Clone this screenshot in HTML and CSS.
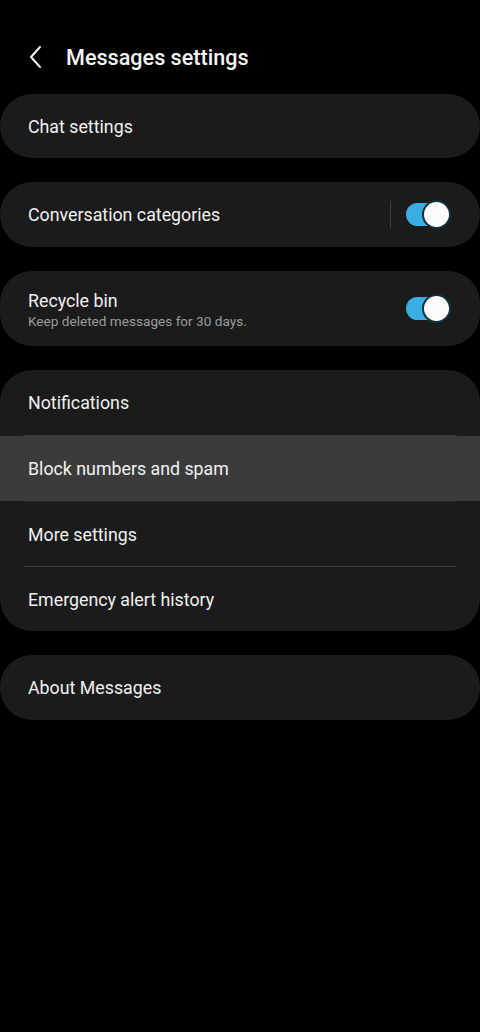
FILE: index.html
```html
<!DOCTYPE html>
<html lang="en">
<head>
    <meta charset="UTF-8">
    <title>Messages settings</title>
    <link rel="stylesheet" href="styles.css">
</head>
<body>
<div class="page">
    <div class="header">
        <svg class="back" width="14" height="24" viewBox="0 0 14 24">
            <path d="M11 2 L2 12 L11 22" fill="none" stroke="#f2f2f2" stroke-width="2" stroke-linecap="round" stroke-linejoin="round"/>
        </svg>
        <h1 class="title">Messages settings</h1>
    </div>

    <div class="card">
        <div class="row"><span class="label">Chat settings</span></div>
    </div>

    <div class="card">
        <div class="row row-switch">
            <span class="label">Conversation categories</span>
            <span class="vline"></span>
            <span class="toggle"></span>
        </div>
    </div>

    <div class="card">
        <div class="row row-tall">
            <div class="text">
                <span class="label">Recycle bin</span>
                <span class="sub">Keep deleted messages for 30 days.</span>
            </div>
            <span class="toggle"></span>
        </div>
    </div>

    <div class="card">
        <div class="row row-first"><span class="label">Notifications</span></div>
        <div class="divider"></div>
        <div class="row row-active"><span class="label">Block numbers and spam</span></div>
        <div class="divider divider-dark"></div>
        <div class="row"><span class="label">More settings</span></div>
        <div class="divider"></div>
        <div class="row"><span class="label">Emergency alert history</span></div>
    </div>

    <div class="card">
        <div class="row row-switch"><span class="label">About Messages</span></div>
    </div>
</div>
</body>
</html>
```

FILE: styles.css
```css
* {
    margin: 0;
    padding: 0;
    box-sizing: border-box;
}

body {
    background: #000000;
    font-family: Roboto, "Liberation Sans", sans-serif;
    color: #f1f1f1;
}

.page {
    width: 480px;
}

.header {
    display: flex;
    align-items: center;
    height: 94px;
    padding: 20px 0 0 29px;
}

.back {
    display: block;
}

.title {
    margin-left: 23px;
    font-size: 21.6px;
    font-weight: 500;
    color: #f4f4f4;
}

.card {
    background: #1b1b1b;
    border-radius: 32px;
    margin-bottom: 24px;
    overflow: hidden;
}

.row {
    display: flex;
    align-items: center;
    height: 64px;
    padding: 0 31px 0 28px;
}

.row-switch {
    height: 65px;
}

.row-first {
    height: 65px;
}

.row-tall {
    height: 75px;
}

.row-active {
    background: #3b3b3b;
    height: 65px;
}

.label {
    font-size: 17.8px;
    color: #f1f1f1;
    flex: 1;
}

.text {
    display: flex;
    flex-direction: column;
    flex: 1;
    padding-top: 2px;
}

.sub {
    font-size: 13.6px;
    color: #9c9c9c;
    margin-top: 2px;
}

.divider {
    height: 1px;
    margin: 0 23px;
    background: #3a3a3a;
}

.divider-dark {
    background: #2a2a2a;
}

.vline {
    width: 1px;
    height: 28px;
    background: #3e3e3e;
    margin-right: 15px;
}

.toggle {
    position: relative;
    width: 43px;
    height: 25px;
}

.toggle::before {
    content: "";
    position: absolute;
    left: 0;
    top: 1px;
    width: 41px;
    height: 23px;
    border-radius: 12px;
    background: #3aaee2;
}

.toggle::after {
    content: "";
    position: absolute;
    right: 0;
    top: 0;
    width: 25px;
    height: 25px;
    border-radius: 50%;
    background: #fbfbfb;
    box-shadow: 0 0 0 2px #13303d;
}
```
